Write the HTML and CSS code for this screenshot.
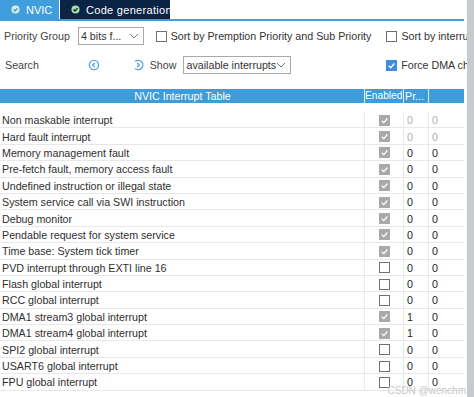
FILE: index.html
```html
<!DOCTYPE html>
<html lang="en">
<head>
  <meta charset="UTF-8" />
  <title>NVIC Configuration</title>
  <link rel="stylesheet" href="styles.css">
</head>
<body>
  <div class="page">
    <div class="main">
      <div class="tabs">
        <div class="tab tab-active">
          <svg class="tab-icon" viewBox="0 0 10 10"><circle cx="5" cy="5" r="4.5" fill="#d8efe0"/><polyline points="2.8,5.1 4.4,6.6 7.2,3.6" fill="none" stroke="#3f9edb" stroke-width="1.5"/></svg>
          NVIC
        </div>
        <div class="tab tab-dark">
          <svg class="tab-icon" viewBox="0 0 10 10"><circle cx="5" cy="5" r="4.5" fill="#a6dca8"/><polyline points="2.8,5.1 4.4,6.6 7.2,3.6" fill="none" stroke="#0b2445" stroke-width="1.5"/></svg>
          Code generation
        </div>
      </div>

      <div class="toolbar row-one">
        <span class="label">Priority Group</span>
        <div class="select select-small">
          <span>4 bits f...</span>
          <svg class="chevron" viewBox="0 0 10 6"><polyline points="1,1 5,5 9,1" fill="none" stroke="#777" stroke-width="1"/></svg>
        </div>
        <label class="check"><span class="box"></span>Sort by Premption Priority and Sub Priority</label>
        <label class="check check-last"><span class="box"></span>Sort by interrupts</label>
      </div>

      <div class="toolbar row-two">
        <span class="label search-label">Search</span>
        <svg class="search-icon icon-prev" viewBox="0 0 12 12"><circle cx="6" cy="6" r="4.6" fill="none" stroke="#5aa7dc" stroke-width="1.4"/><polyline points="6.8,4 4.8,6 6.8,8" fill="none" stroke="#5aa7dc" stroke-width="1.4"/></svg>
        <svg class="search-icon icon-next" viewBox="0 0 12 12"><path d="M3.2 2.6 A4.6 4.6 0 1 1 3.2 9.4" fill="none" stroke="#5aa7dc" stroke-width="1.4"/><polyline points="5.2,4 7.2,6 5.2,8" fill="none" stroke="#5aa7dc" stroke-width="1.4"/></svg>
        <span class="label">Show</span>
        <div class="select select-wide">
          <span>available interrupts</span>
          <svg class="chevron" viewBox="0 0 10 6"><polyline points="1,1 5,5 9,1" fill="none" stroke="#777" stroke-width="1"/></svg>
        </div>
        <label class="check check-last"><span class="box box-on"><svg viewBox="0 0 10 10"><polyline points="2,5.2 4.2,7.4 8.2,2.8" fill="none" stroke="#fff" stroke-width="1.6"/></svg></span>Force DMA channels</label>
      </div>

      <div class="grid-head">
        <div class="head-cell head-title">NVIC Interrupt Table</div>
        <div class="head-cell head-small">Enabled</div>
        <div class="head-cell">Pr...</div>
        <div class="head-cell"></div>
      </div>

      <div class="grid-body" id="rows"></div>
    </div>
    <div class="scrollbar"></div>
  </div>
  <div class="watermark">CSDN @wenchm</div>

  <script>
    const rows = [
      ["Non maskable interrupt", true, "0", "0", true],
      ["Hard fault interrupt", true, "0", "0", true],
      ["Memory management fault", true, "0", "0"],
      ["Pre-fetch fault, memory access fault", true, "0", "0"],
      ["Undefined instruction or illegal state", true, "0", "0"],
      ["System service call via SWI instruction", true, "0", "0"],
      ["Debug monitor", true, "0", "0"],
      ["Pendable request for system service", true, "0", "0"],
      ["Time base: System tick timer", true, "0", "0"],
      ["PVD interrupt through EXTI line 16", false, "0", "0"],
      ["Flash global interrupt", false, "0", "0"],
      ["RCC global interrupt", false, "0", "0"],
      ["DMA1 stream3 global interrupt", true, "1", "0"],
      ["DMA1 stream4 global interrupt", true, "1", "0"],
      ["SPI2 global interrupt", false, "0", "0"],
      ["USART6 global interrupt", false, "0", "0"],
      ["FPU global interrupt", false, "0", "0"]
    ];

    const tick = '<svg viewBox="0 0 10 10"><polyline points="2,5.2 4.2,7.4 8.2,2.8" fill="none" stroke="#fff" stroke-width="1.4"/></svg>';
    const body = document.getElementById("rows");

    rows.forEach(r => {
      const row = document.createElement("div");
      row.className = "grid-row" + (r[4] ? " fixed" : "");
      row.innerHTML =
        '<div class="cell name">' + r[0] + '</div>' +
        '<div class="cell enabled"><span class="tick' + (r[1] ? ' tick-on">' + tick : '">') + '</span></div>' +
        '<div class="cell num">' + r[2] + '</div>' +
        '<div class="cell num">' + r[3] + '</div>';
      body.appendChild(row);
    });
  </script>
</body>
</html>
```

FILE: styles.css
```css
* { box-sizing: border-box; }

html, body {
  margin: 0;
  padding: 0;
  background: white;
  font-family: "Liberation Sans", Arial, sans-serif;
  font-size: 10.7px;
  color: #333;
  overflow: hidden;
}

.page {
  display: flex;
  width: 474px;
  height: 397px;
}

.main {
  width: 467px;
  overflow: hidden;
}

.scrollbar {
  width: 7px;
  background: #c6cbd0;
}

/* tabs */
.tabs {
  display: flex;
  height: 21px;
  border-bottom: 2px solid #3f9edb;
  width: 464px;
}

.tab {
  display: flex;
  align-items: center;
  gap: 6px;
  height: 19px;
  color: white;
  font-size: 11px;
  white-space: nowrap;
  padding: 0 0 0 11px;
}

.tab-active { width: 59px; background: #3f9edb; }
.tab-dark { width: 110px; background: #0b2445; margin-left: 1px; letter-spacing: 0.3px; }

.tab-icon { width: 9px; height: 9px; flex-shrink: 0; }

/* toolbar */
.toolbar {
  display: flex;
  align-items: center;
  height: 18px;
  white-space: nowrap;
}

.row-one { margin-top: 6px; }
.row-two { margin-top: 11px; }

.label { padding-left: 4px; color: #444; }
.search-label { padding-left: 5px; width: 88px; }

.select {
  display: flex;
  align-items: center;
  justify-content: space-between;
  height: 18px;
  border: 1px solid #a9a9a9;
  padding: 0 4px 0 2px;
  color: #333;
}

.select-small { width: 66px; margin-left: 8px; }
.select-wide { width: 108px; margin-left: 7px; }

.chevron { width: 10px; height: 6px; }

.check {
  display: flex;
  align-items: center;
  gap: 4px;
  margin-left: 12px;
  color: #333;
}

.check-last { width: 81px; overflow: hidden; }
.row-one .check-last { margin-left: 15px; }
.row-two .check-last { margin-left: 95px; }

.box {
  display: inline-block;
  width: 11px;
  height: 11px;
  border: 1px solid #6f6f6f;
  background: white;
  flex-shrink: 0;
}

.box-on {
  background: #3d8ee0;
  border-color: #3d8ee0;
}

.box-on svg { display: block; width: 9px; height: 9px; }

.search-icon { width: 12px; height: 12px; }
.icon-next { margin-left: 32px; margin-right: 2px; }

/* table */
.grid-head,
.grid-row {
  display: grid;
  grid-template-columns: 364px 39px 25px 36px;
  width: 464px;
}

.grid-head {
  margin-top: 15px;
  height: 14px;
  background: #3d9cd9;
  color: white;
}

.head-cell {
  border-left: 1px solid #d8ecf8;
  line-height: 14px;
  padding-left: 1px;
  white-space: nowrap;
  overflow: hidden;
}

.head-small { font-size: 10.2px; padding-left: 0; }

.head-title {
  border-left: none;
  text-align: center;
}

.grid-body { margin-top: 9px; }

.grid-row {
  height: 16.4px;
  border-bottom: 1px solid #e8e8e8;
}

.cell {
  display: flex;
  align-items: center;
  white-space: nowrap;
  padding-top: 1px;
}

.name { padding-left: 2px; color: #2f2f2f; }

.enabled,
.num { border-left: 1px solid #ebebeb; }

.enabled { justify-content: center; padding-left: 1px; }

.num { padding-left: 3px; color: #222; }

.fixed .num { color: #b0b0b0; }

.tick {
  display: inline-block;
  width: 11px;
  height: 11px;
  border: 1px solid #707070;
  background: white;
}

.tick-on {
  background: #a9a9a9;
  border-color: #a9a9a9;
}

.tick-on svg { display: block; width: 9px; height: 9px; }

.watermark {
  position: absolute;
  right: 8px;
  bottom: 1px;
  font-size: 10px;
  color: #c8c8c8;
}
```
